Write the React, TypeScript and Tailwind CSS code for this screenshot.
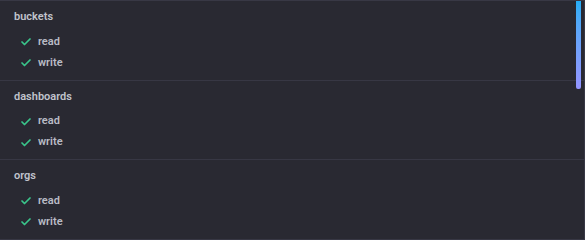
import { Check } from "lucide-react";

const groups = [
  { name: "buckets", perms: ["read", "write"] },
  { name: "dashboards", perms: ["read", "write"] },
  { name: "orgs", perms: ["read", "write"] },
];

export default function App() {
  return (
    <div
      className="relative h-[240px] w-[585px] overflow-hidden border-t border-r border-[#383845] bg-[#292932]"
      style={{ fontFamily: "Roboto, 'Noto Sans', sans-serif" }}
    >
      <div className="flex flex-col">
        {groups.map((group) => (
          <div key={group.name} className="h-[79.5px] border-b border-[#373744] px-[14px] pt-[8px]">
            <div className="text-[11px] font-semibold leading-[16px] text-[#c0c3cc]">{group.name}</div>
            <div className="mt-[9px] flex flex-col gap-[5px] pl-[6px]">
              {group.perms.map((perm) => (
                <div key={perm} className="flex h-[16px] items-center gap-[6px]">
                  <Check className="h-[12px] w-[12px] text-[#3ac58b]" strokeWidth={3.5} />
                  <span className="text-[11px] font-semibold text-[#b9bcc6]">{perm}</span>
                </div>
              ))}
            </div>
          </div>
        ))}
      </div>
      <div className="absolute right-[3px] top-0 h-[88px] w-[5px] rounded-b-[2px] bg-gradient-to-b from-[#22adf6] to-[#9394ff]" />
    </div>
  );
}
